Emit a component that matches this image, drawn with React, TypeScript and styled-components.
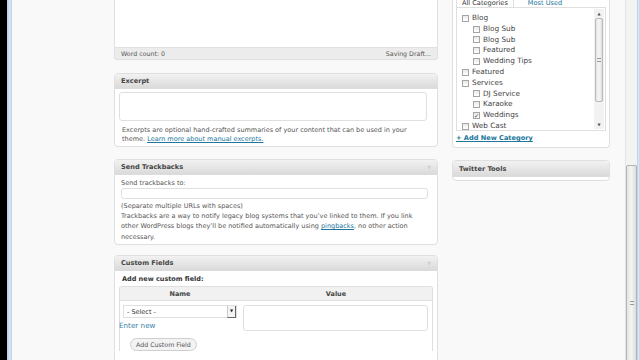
import React from 'react';
import styled, { createGlobalStyle } from 'styled-components';

const GlobalStyle = createGlobalStyle`
  html, body {
    margin: 0;
    padding: 0;
    overflow: hidden;
    background: #000;
  }
  body {
    font-family: "DejaVu Sans", Verdana, sans-serif;
    color: #333;
  }
`;

const Frame = styled.div`
  display: flex;
  width: 640px;
  height: 360px;
  overflow: hidden;
  background: #000;
  padding-left: 7px;
  box-sizing: border-box;
`;

const WindowEdge = styled.div<{ $w: number }>`
  flex: none;
  width: ${(p) => p.$w}px;
  background: linear-gradient(to right, #b7cbe2, #d9e5f2, #c3d4e8);
`;

const Page = styled.div`
  flex: 1;
  display: flex;
  align-items: flex-start;
  gap: 14px;
  background: #f9f9f9;
  padding-left: 102px;
  overflow: hidden;
`;

const MainColumn = styled.div`
  flex: none;
  width: 324px;
  display: flex;
  flex-direction: column;
`;

const SideColumn = styled.div`
  flex: none;
  width: 158px;
  display: flex;
  flex-direction: column;
`;

/* editor */
const EditorArea = styled.div`
  height: 47px;
  background: #fff;
  border: 1px solid #dfdfdf;
  border-top: none;
  border-bottom: none;
  box-sizing: border-box;
`;

const StatusBar = styled.div`
  height: 13px;
  display: flex;
  align-items: center;
  justify-content: space-between;
  padding: 0 6px 0 6px;
  background: #ececec;
  border: 1px solid #dfdfdf;
  border-radius: 0 0 3px 3px;
  box-sizing: border-box;
  font-size: 6.3px;
  color: #555;
`;

/* postboxes */
const Postbox = styled.div<{ $top: number }>`
  margin-top: ${(p) => p.$top}px;
  background: #fff;
  border: 1px solid #dfdfdf;
  border-radius: 4px;
  overflow: hidden;
`;

const PostboxHeader = styled.div<{ $h?: number }>`
  height: ${(p) => p.$h ?? 15}px;
  display: flex;
  align-items: center;
  justify-content: space-between;
  padding: 0 6px;
  background: linear-gradient(#f2f2f2, #dadada);
  border-bottom: 1px solid #dcdcdc;
  font-size: 6.6px;
  font-weight: bold;
  color: #464646;
  box-sizing: border-box;
`;

const Toggle = styled.span`
  font-size: 5px;
  color: #cfcfcf;
  font-weight: normal;
`;

const PostboxBody = styled.div<{ $pad: string }>`
  padding: ${(p) => p.$pad};
  font-size: 6.5px;
  line-height: 10.3px;
  color: #555;
`;

const TextBox = styled.div<{ $h: number }>`
  height: ${(p) => p.$h}px;
  background: #fff;
  border: 1px solid #dfdfdf;
  border-radius: 3px;
  box-sizing: border-box;
`;

const Note = styled.p<{ $top?: number; $lh?: number; $indent?: number }>`
  margin: ${(p) => p.$top ?? 0}px 0 0;
  padding-left: ${(p) => p.$indent ?? 0}px;
  line-height: ${(p) => (p.$lh ? `${p.$lh}px` : 'inherit')};
`;

const Link = styled.a`
  color: #21759b;
  text-decoration: underline;
`;

/* custom fields */
const FieldLabel = styled.div`
  font-weight: bold;
  color: #333;
  padding-left: 3px;
`;

const FieldTable = styled.div`
  margin-top: 2px;
  border: 1px solid #dfdfdf;
  border-bottom: none;
  border-radius: 3px 3px 0 0;
  display: grid;
  grid-template-columns: 120px 1fr;
`;

const FieldHead = styled.div`
  height: 13px;
  display: flex;
  align-items: center;
  justify-content: center;
  background: #f1f1f1;
  border-bottom: 1px solid #dfdfdf;
  font-weight: bold;
  color: #464646;
`;

const FieldCell = styled.div<{ $pad: string }>`
  padding: ${(p) => p.$pad};
  display: flex;
  flex-direction: column;
`;

const SelectBox = styled.div`
  width: 114px;
  height: 13px;
  display: flex;
  align-items: center;
  justify-content: space-between;
  background: #fff;
  border: 1px solid #dfdfdf;
  box-sizing: border-box;
  padding-left: 3px;
  color: #333;
`;

const SelectArrow = styled.span`
  width: 7px;
  height: 11px;
  display: flex;
  align-items: center;
  justify-content: center;
  border-left: 1px solid #ccc;
  border-right: 1px solid #666;
  border-bottom: 1px solid #666;
  font-size: 4px;
  color: #222;
  background: #f4f4f4;
`;

const EnterNew = styled.a`
  margin: 3px 0 0 -4px;
  font-size: 7.2px;
  line-height: 10px;
  color: #3b7fa8;
`;

const PillButton = styled.button`
  margin: 7px 0 0 7px;
  align-self: flex-start;
  height: 13px;
  padding: 0 5px;
  border: 1px solid #cfcfcf;
  border-radius: 7px;
  background: #f3f3f3;
  font-family: inherit;
  font-size: 6.3px;
  color: #555;
  line-height: 11px;
`;

/* categories */
const CategoryBody = styled.div`
  margin-top: -2px;
  background: #fff;
  border: 1px solid #dfdfdf;
  border-top: none;
  border-radius: 0 0 4px 4px;
  padding: 0 3px 4px 3px;
`;

const Tabs = styled.div`
  display: flex;
  align-items: flex-end;
  gap: 8px;
  height: 9px;
  font-size: 6.6px;
`;

const Tab = styled.div<{ $active?: boolean }>`
  height: 9px;
  display: flex;
  align-items: center;
  padding: 0 5px;
  background: ${(p) => (p.$active ? '#fff' : 'transparent')};
  border: 1px solid ${(p) => (p.$active ? '#dfdfdf' : 'transparent')};
  border-bottom: none;
  border-radius: 3px 3px 0 0;
  box-sizing: border-box;
  color: ${(p) => (p.$active ? '#333' : '#21759b')};
`;

const ListPanel = styled.div`
  height: 124px;
  display: flex;
  border: 1px solid #dfdfdf;
  background: #fff;
  box-sizing: border-box;
`;

const CatList = styled.ul`
  flex: 1;
  list-style: none;
  margin: 0;
  padding: 5px 0 0 5px;
  font-size: 7.3px;
  line-height: 10.8px;
  color: #444;
`;

const CatItem = styled.li<{ $depth: number }>`
  display: flex;
  align-items: center;
  gap: 3px;
  padding-left: ${(p) => p.$depth * 11}px;
`;

const CheckBox = styled.span`
  width: 7px;
  height: 7px;
  box-sizing: border-box;
  border: 1px solid #a5a5a5;
  background: linear-gradient(#e9e9e9, #fff);
  display: flex;
  align-items: center;
  justify-content: center;
  font-size: 6px;
  line-height: 1;
  color: #333;
`;

const ListScroll = styled.div`
  width: 10px;
  margin: 1px 1px 1px 0;
  display: flex;
  flex-direction: column;
  align-items: stretch;
  background: #f2f2f2;
`;

const ScrollArrow = styled.div`
  height: 9px;
  display: flex;
  align-items: center;
  justify-content: center;
  font-size: 4px;
  color: #555;
`;

const ScrollThumb = styled.div<{ $h: number }>`
  height: ${(p) => p.$h}px;
  margin: 0 1px;
  border: 1px solid #b9b9b9;
  border-radius: 2px;
  background: linear-gradient(to right, #e6e6e6, #f6f6f6, #e0e0e0);
  display: flex;
  align-items: center;
  justify-content: center;
`;

const ScrollSpace = styled.div`
  flex: 1;
`;

const Grip = styled.span`
  width: 4px;
  height: 4px;
  border-top: 1px solid #999;
  border-bottom: 1px solid #999;
  box-sizing: border-box;
`;

const AddCategory = styled.a`
  display: block;
  margin-top: 2px;
  font-size: 6.6px;
  line-height: 10px;
  font-weight: bold;
  color: #21759b;
  text-decoration: underline;
`;

/* page scrollbar */
const PageScroll = styled.div`
  flex: none;
  width: 12px;
  display: flex;
  flex-direction: column;
  background: #f3f3f3;
  border-left: 1px solid #e4e4e4;
  box-sizing: border-box;
`;

const PageThumb = styled.div`
  margin-top: 165px;
  flex: 1;
  border: 1px solid #b4b4b4;
  border-bottom: none;
  border-radius: 2px 2px 0 0;
  background: linear-gradient(to right, #e4e4e4, #f4f4f4, #dcdcdc);
  display: flex;
  justify-content: center;
  padding-top: 135px;
`;

const categories: { name: string; depth: number; checked?: boolean }[] = [
  { name: 'Blog', depth: 0 },
  { name: 'Blog Sub', depth: 1 },
  { name: 'Blog Sub', depth: 1 },
  { name: 'Featured', depth: 1 },
  { name: 'Wedding Tips', depth: 1 },
  { name: 'Featured', depth: 0 },
  { name: 'Services', depth: 0 },
  { name: 'DJ Service', depth: 1 },
  { name: 'Karaoke', depth: 1 },
  { name: 'Weddings', depth: 1, checked: true },
  { name: 'Web Cast', depth: 0 },
];

const App = () => {
  return (
    <>
      <GlobalStyle />
      <Frame>
        <WindowEdge $w={5} />
        <Page>
          <MainColumn>
            <EditorArea />
            <StatusBar>
              <span>Word count: 0</span>
              <span>Saving Draft...</span>
            </StatusBar>

            <Postbox $top={13}>
              <PostboxHeader>Excerpt</PostboxHeader>
              <PostboxBody $pad="3px 10px 1px 4px">
                <TextBox $h={29} />
                <Note $top={5} $lh={9.3} $indent={3}>
                  Excerpts are optional hand-crafted summaries of your content that can be used in your
                  <br />
                  theme. <Link>Learn more about manual excerpts.</Link>
                </Note>
              </PostboxBody>
            </Postbox>

            <Postbox $top={12}>
              <PostboxHeader>
                Send Trackbacks <Toggle>▼</Toggle>
              </PostboxHeader>
              <PostboxBody $pad="3px 9px 2px 6px">
                <div>Send trackbacks to:</div>
                <TextBox $h={11} />
                <Note $top={2}>(Separate multiple URLs with spaces)</Note>
                <Note>
                  Trackbacks are a way to notify legacy blog systems that you’ve linked to them. If you link
                  <br />
                  other WordPress blogs they’ll be notified automatically using <Link>pingbacks</Link>, no other action
                  <br />
                  necessary.
                </Note>
              </PostboxBody>
            </Postbox>

            <Postbox $top={10}>
              <PostboxHeader>
                Custom Fields <Toggle>▼</Toggle>
              </PostboxHeader>
              <PostboxBody $pad="3px 4px 20px 4px">
                <FieldLabel>Add new custom field:</FieldLabel>
                <FieldTable>
                  <FieldHead>Name</FieldHead>
                  <FieldHead>Value</FieldHead>
                  <FieldCell $pad="4px 0 0 3px">
                    <SelectBox>
                      - Select -<SelectArrow>▼</SelectArrow>
                    </SelectBox>
                    <EnterNew>Enter new</EnterNew>
                    <PillButton>Add Custom Field</PillButton>
                  </FieldCell>
                  <FieldCell $pad="4px 4px 0 3px">
                    <TextBox $h={26} />
                  </FieldCell>
                </FieldTable>
              </PostboxBody>
            </Postbox>
          </MainColumn>

          <SideColumn>
            <CategoryBody>
              <Tabs>
                <Tab $active>All Categories</Tab>
                <Tab>Most Used</Tab>
              </Tabs>
              <ListPanel>
                <CatList>
                  {categories.map((c, i) => (
                    <CatItem key={i} $depth={c.depth}>
                      <CheckBox>{c.checked ? '✓' : ''}</CheckBox>
                      {c.name}
                    </CatItem>
                  ))}
                </CatList>
                <ListScroll>
                  <ScrollArrow>▲</ScrollArrow>
                  <ScrollThumb $h={82}>
                    <Grip />
                  </ScrollThumb>
                  <ScrollSpace />
                  <ScrollArrow>▼</ScrollArrow>
                </ListScroll>
              </ListPanel>
              <AddCategory>+ Add New Category</AddCategory>
            </CategoryBody>

            <Postbox $top={12}>
              <PostboxHeader $h={16}>Twitter Tools</PostboxHeader>
              <PostboxBody $pad="3px 0 0" />
            </Postbox>
          </SideColumn>
        </Page>
        <PageScroll>
          <PageThumb>
            <Grip />
          </PageThumb>
        </PageScroll>
        <WindowEdge $w={3} />
      </Frame>
    </>
  );
};

export default App;
